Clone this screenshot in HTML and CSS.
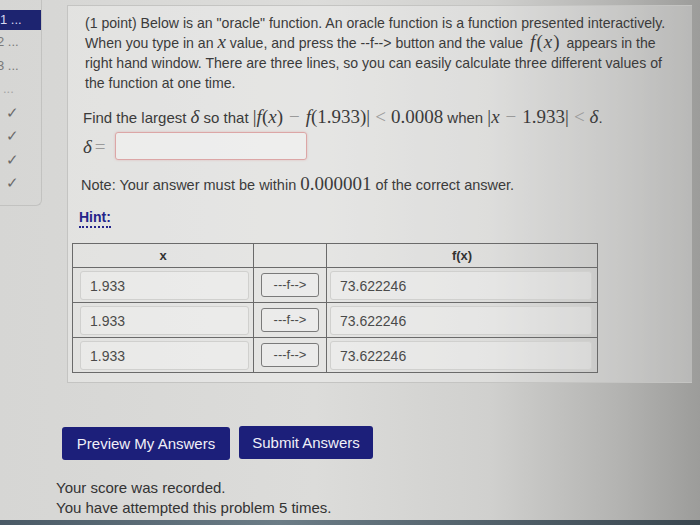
FILE: index.html
```html
<!DOCTYPE html>
<html>
<head>
<meta charset="utf-8">
<link rel="stylesheet" href="styles.css">
</head>
<body>
<div class="screen">
  <aside class="side">
    <div class="nav-item active">1 ...</div>
    <div class="nav-item">2 ...</div>
    <div class="nav-item">3 ...</div>
    <div class="nav-item dim">...</div>
    <div class="nav-item check">&#10003;</div>
    <div class="nav-item check">&#10003;</div>
    <div class="nav-item check">&#10003;</div>
    <div class="nav-item check">&#10003;</div>
  </aside>
  <main class="main">
    <section class="problem">
      <p class="intro">(1 point) Below is an "oracle" function. An oracle function is a function presented interactively.<br>When you type in an <span class="m">x</span> value, and press the --f--&gt; button and the value <span class="fx"><span class="m">f</span><span class="mr">(</span><span class="m">x</span><span class="mr">)</span></span> appears in the<br>right hand window. There are three lines, so you can easily calculate three different values of<br>the function at one time.</p>
      <p class="question">Find the largest <span class="m">δ</span> so that <span class="mr">|</span><span class="m">f</span><span class="mr">(</span><span class="m">x</span><span class="mr">)</span><span class="op bin">−</span><span class="m">f</span><span class="mr">(1.933)|</span><span class="op rel">&lt;</span><span class="mr">0.0008</span> when <span class="mr">|</span><span class="m">x</span><span class="op bin">−</span><span class="mr">1.933|</span><span class="op rel">&lt;</span><span class="m">δ</span>.</p>
      <div class="answer"><span class="m">δ</span><span class="op rel">=</span><span class="answer-box"></span></div>
      <p class="note">Note: Your answer must be within <span class="mr">0.000001</span> of the correct answer.</p>
      <div class="hint">Hint:</div>
      <table class="oracle">
        <tr class="head"><th class="c1">x</th><th class="c2"></th><th class="c3">f(x)</th></tr>
        <tr><td class="c1"><span class="field">1.933</span></td><td class="c2"><span class="fbtn">---f--&gt;</span></td><td class="c3"><span class="field">73.622246</span></td></tr>
        <tr><td class="c1"><span class="field">1.933</span></td><td class="c2"><span class="fbtn">---f--&gt;</span></td><td class="c3"><span class="field">73.622246</span></td></tr>
        <tr><td class="c1"><span class="field">1.933</span></td><td class="c2"><span class="fbtn">---f--&gt;</span></td><td class="c3"><span class="field">73.622246</span></td></tr>
      </table>
    </section>
    <div class="actions">
      <span class="btn preview">Preview My Answers</span>
      <span class="btn submit">Submit Answers</span>
    </div>
    <div class="status">
      <div>Your score was recorded.</div>
      <div>You have attempted this problem 5 times.</div>
    </div>
  </main>
</div>
<div class="bezel"></div>
</body>
</html>
```
FILE: styles.css
```css
html, body {
  margin: 0;
  padding: 0;
}
body {
  width: 700px;
  height: 525px;
  overflow: hidden;
  font-family: "Liberation Sans", Arial, sans-serif;
  color: #3b3b3b;
  background: linear-gradient(90deg, #d6d6d4 0%, #dcdcda 45%, #d0d0ce 70%, #b4b4b2 88%, #9c9c9a 100%);
}
.screen {
  display: flex;
  height: 520px;
}
.side {
  width: 42px;
  padding-top: 10px;
  border-right: 1px solid #c2c2c0;
  border-bottom: 1px solid #c2c2c0;
  border-bottom-right-radius: 6px;
  box-sizing: border-box;
  height: 206px;
  flex: none;
  overflow: hidden;
}
.nav-item {
  height: 23.5px;
  line-height: 23.5px;
  font-size: 13px;
  color: #7a7a7a;
  white-space: nowrap;
  margin-left: -3px;
}
.nav-item.active {
  height: 20px;
  line-height: 20px;
  background: #1d2470;
  color: #d8daf0;
  margin-left: 0;
}
.nav-item.dim { color: #a4a4a4; padding-left: 6px; }
.nav-item.check { color: #6a6a6a; padding-left: 9px; font-size: 15px; }
.main {
  flex: 1;
  padding-left: 14px;
  display: flex;
  flex-direction: column;
}
.problem {
  margin-top: 5px;
  margin-left: 11px;
  margin-right: 8px;
  border: 1px solid #c4c4c2;
  border-right: none;
  background: rgba(255, 255, 255, 0.28);
  padding: 7px 4px 10px 15px;
  height: 378px;
  box-sizing: border-box;
}
.intro {
  margin: 0 0 0 2px;
  font-size: 14.1px;
  line-height: 20px;
  white-space: nowrap;
}
.m {
  font-family: "Liberation Serif", "DejaVu Serif", serif;
  font-style: italic;
  font-size: 19px;
  line-height: 0;
}
.mr {
  font-family: "Liberation Serif", "DejaVu Serif", serif;
  font-size: 19px;
  line-height: 0;
}
.op {
  font-family: "Liberation Serif", "DejaVu Serif", serif;
  font-size: 19px;
  line-height: 0;
  color: #9a9a9a;
}
.fx { margin: 0 2px 0 3px; letter-spacing: 1px; }
.op.bin { margin: 0 6px; }
.op.rel { margin: 0 5px; }
.question {
  margin: 15px 0 0 0;
  font-size: 15px;
  line-height: 20px;
  white-space: nowrap;
}
.answer {
  margin-top: 4px;
  display: flex;
  align-items: center;
  height: 28px;
}
.answer .op.rel { margin: 0 9px 0 3px; line-height: 1; }
.answer .m { line-height: 1; }
.answer-box {
  width: 190px;
  height: 26px;
  border: 1px solid #dca6a6;
  border-radius: 3px;
  background: rgba(255, 255, 255, 0.35);
  box-shadow: 0 0 2px rgba(220, 140, 140, 0.5);
}
.note {
  margin: 15px 0 0 -2px;
  font-size: 14.5px;
  line-height: 20px;
}
.hint {
  margin: 13px 0 0 -4px;
  font-size: 14px;
  font-weight: bold;
  color: #24248a;
  display: inline-block;
  border-bottom: 2px dotted #24248a;
  line-height: 18px;
}
.oracle {
  margin: 15px 0 0 -11px;
  width: 526px;
  border-collapse: collapse;
  border: 1.5px solid #5a5a5a;
  font-size: 14px;
}
.oracle th, .oracle td {
  border: 1px solid #6a6a6a;
  padding: 0;
}
.oracle th {
  height: 23px;
  font-size: 13px;
  color: #333;
}
.oracle td { height: 33px; }
.oracle .c1 { width: 180px; }
.oracle .c2 { width: 72px; text-align: center; }
.field {
  display: flex;
  align-items: center;
  margin: 3px 4px 2px 7px;
  height: 27px;
  border: 1px solid #d0d0ce;
  border-radius: 3px;
  background: rgba(255, 255, 255, 0.25);
  padding-left: 9px;
  color: #4a4a4a;
}
.c3 .field { margin-left: 3px; margin-right: 5px; padding-left: 9px; }
.fbtn {
  display: inline-block;
  width: 56px;
  height: 22px;
  line-height: 22px;
  border: 1px solid #7a7a7a;
  border-radius: 3px;
  font-size: 13px;
  color: #4a4a4a;
  background: rgba(255, 255, 255, 0.25);
}
.actions {
  margin-top: 44px;
  margin-left: 6px;
  display: flex;
  gap: 9px;
}
.btn {
  display: inline-flex;
  align-items: center;
  justify-content: center;
  height: 33px;
  background: #1c1f7a;
  color: #f0f0f8;
  font-size: 15px;
  border-radius: 3px;
}
.preview { width: 168px; }
.submit { width: 134px; margin-top: -1px; }
.status {
  margin-top: 18px;
  font-size: 15px;
  line-height: 20px;
  color: #333;
}
.bezel {
  height: 5px;
  background: linear-gradient(90deg, #4a5a66, #6b7c86 40%, #39464f);
}
```
